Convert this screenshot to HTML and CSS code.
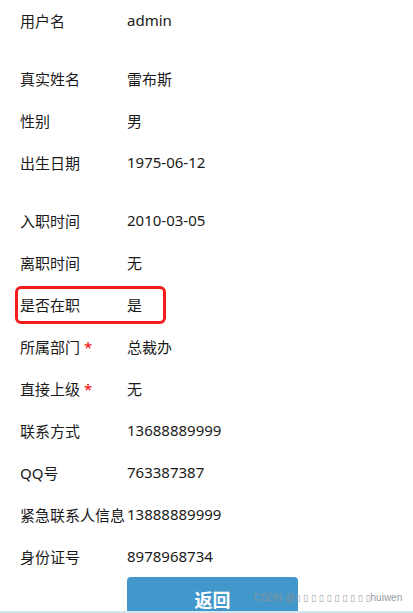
FILE: index.html
```
<!DOCTYPE html>
<html lang="zh-CN">
<head>
    <meta charset="UTF-8">
    <meta name="viewport" content="width=device-width, initial-scale=1.0">
    <title>员工信息</title>
    <link rel="stylesheet" href="styles.css">
</head>
<body>
    <div class="info">
        <div class="row"><span class="label">用户名</span><span class="value">admin</span></div>
        <div class="space"></div>
        <div class="row"><span class="label">真实姓名</span><span class="value">雷布斯</span></div>
        <div class="row"><span class="label">性别</span><span class="value">男</span></div>
        <div class="row"><span class="label">出生日期</span><span class="value">1975-06-12</span></div>
        <div class="space"></div>
        <div class="row"><span class="label">入职时间</span><span class="value">2010-03-05</span></div>
        <div class="row"><span class="label">离职时间</span><span class="value">无</span></div>
        <div class="row mark"><span class="label">是否在职</span><span class="value">是</span><i class="mark-box"></i></div>
        <div class="row"><span class="label">所属部门 <em>*</em></span><span class="value">总裁办</span></div>
        <div class="row"><span class="label">直接上级 <em>*</em></span><span class="value">无</span></div>
        <div class="row"><span class="label">联系方式</span><span class="value">13688889999</span></div>
        <div class="row"><span class="label">QQ号</span><span class="value">763387387</span></div>
        <div class="row"><span class="label">紧急联系人信息</span><span class="value">13888889999</span></div>
        <div class="row"><span class="label">身份证号</span><span class="value">8978968734</span></div>
        <div class="btn-wrap">
            <a href="javascript:;" class="btn">返回</a>
        </div>
    </div>
    <div class="wm">CSDN @<span class="box">▯ ▯ ▯ ▯ ▯ ▯ ▯ ▯ ▯ ▯</span>huiwen</div>
    <div class="bottom-line"></div>
</body>
</html>
```
FILE: styles.css
```
*{padding:0px;margin:0px;box-sizing:border-box;}

body{
    font-family:"Noto Sans","Noto Sans CJK SC",sans-serif;
    font-size:15px;
    color:#1a1a1a;
    background:#fff;
    overflow:hidden;
}

a{text-decoration:none;}

.info{
    padding-left:20px;
    margin-top:-1px;
}
.row{
    height:42px;
    display:flex;
    align-items:center;
    position:relative;
}
.space{height:16px;}
.label{
    width:107px;
    white-space:nowrap;
}
.label em{
    font-style:normal;
    color:#f00;
}
.value{
    white-space:nowrap;
}

/* 红色标注框 */
.mark-box{
    position:absolute;
    left:-5px;top:3px;
    width:151px;height:38px;
    border:3px solid #f41c1c;
    border-radius:6px;
}

.btn-wrap{
    padding-left:107px;
}
.btn{
    display:block;
    width:171px;height:46px;
    line-height:46px;
    background:#4298cb;
    border-radius:4px;
    color:#fff;
    font-size:18px;
    font-weight:bold;
    text-align:center;
}

.wm{
    position:absolute;
    left:254px;top:592px;
    font-family:"Liberation Sans",Arial,sans-serif;
    font-size:10px;
    color:#8b939c;
    white-space:nowrap;
    opacity:0.9;
}
.wm .box{
    font-family:"DejaVu Sans",sans-serif;
    font-size:9px;
    letter-spacing:0px;
}
.bottom-line{
    position:fixed;
    left:0px;right:0px;bottom:0px;
    height:2px;
    background:#d3e6f0;
}
```
